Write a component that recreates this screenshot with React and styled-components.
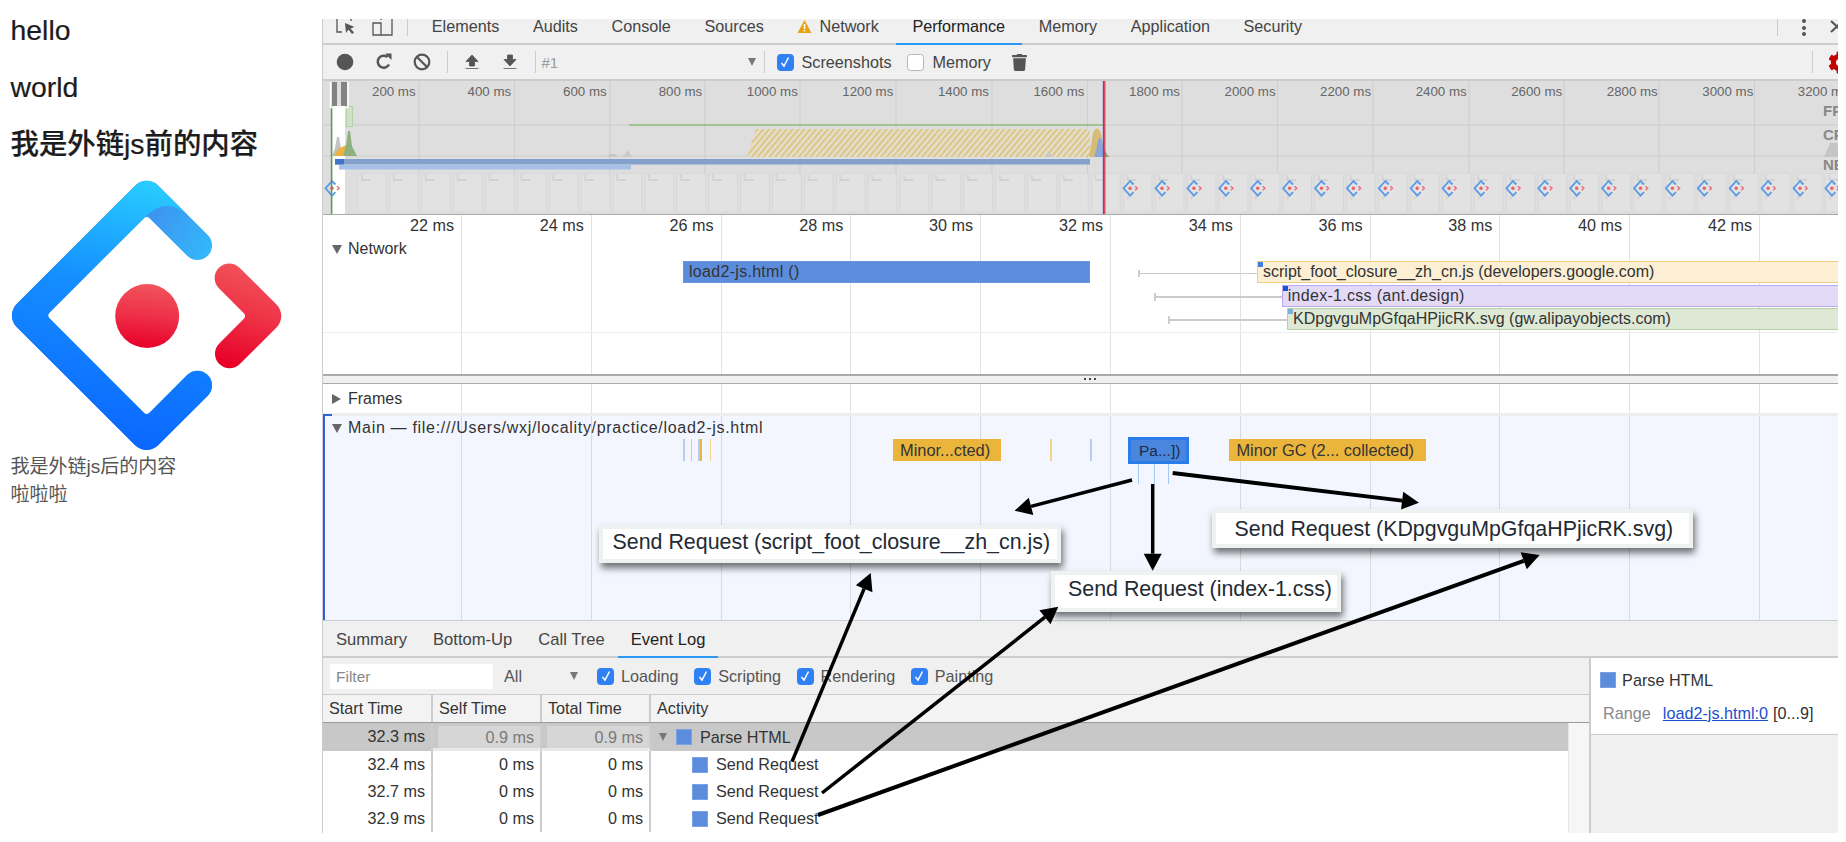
import styled, { createGlobalStyle } from 'styled-components'
import { FaCog, FaTrash } from 'react-icons/fa'

const GlobalStyle = createGlobalStyle`
    html, body {
        margin: 0;
        background: #fff;
    }
    * {
        box-sizing: border-box;
    }
    body {
        font-family: "Liberation Sans", "Noto Sans CJK SC", sans-serif;
        color: #333;
    }
`

const overviewTicks = [418, 513.5, 609, 704, 799, 895, 991, 1086.5, 1181, 1276.5, 1372, 1468, 1563, 1658, 1753.5]
const overviewLabels = [200, 400, 600, 800, 1000, 1200, 1400, 1600, 1800, 2000, 2200, 2400, 2600, 2800, 3000, 3200]
const flameLabels = [22, 24, 26, 28, 30, 32, 34, 36, 38, 40, 42]
const flameTicks = flameLabels.map((_, i) => 138 + i * 129.8)
const topTabs = ['Elements', 'Audits', 'Console', 'Sources', 'Network', 'Performance', 'Memory', 'Application', 'Security']
const filters = ['Loading', 'Scripting', 'Rendering', 'Painting']
const thumbs = Array.from({ length: 47 }, (_, i) => i)
const requests = ['32.4 ms', '32.7 ms', '32.9 ms']
const stripes = [
    { x: 360, color: '#b5cdf3' },
    { x: 367.6, color: '#b5cdf3' },
    { x: 375, color: '#b5cdf3' },
    { x: 377, color: '#e8b53e' },
    { x: 386.5, color: '#f1d48e' },
    { x: 727, color: '#f1d48e' },
    { x: 767, color: '#b5cdf3' },
]
const callouts = [
    { x: 599, y: 525, w: 462, h: 38, pad: 13.5, shift: -2, text: 'Send Request (script_foot_closure__zh_cn.js)' },
    { x: 1051, y: 571, w: 290, h: 41, pad: 17, shift: -2, text: 'Send Request (index-1.css)' },
    { x: 1211.5, y: 509, w: 481.5, h: 39, pad: 23, shift: 1, text: 'Send Request (KDpgvguMpGfqaHPjicRK.svg)' },
]
const arrows = [
    { x1: 1132, y1: 480, x2: 1014.6, y2: 510.7, w: 3.5 },
    { x1: 1152.7, y1: 484, x2: 1152.7, y2: 570.7, w: 3.5 },
    { x1: 1172.7, y1: 473, x2: 1419, y2: 502.7, w: 3.8 },
    { x1: 792, y1: 761.7, x2: 870.7, y2: 573, w: 3.5 },
    { x1: 822, y1: 793, x2: 1058.3, y2: 606.7, w: 3.5 },
    { x1: 818, y1: 815, x2: 1539.7, y2: 555, w: 4 },
]

function AntLogo() {
    const body = 'M91.5880863,4.17652823 L4.17996544,91.5127728 C-0.519240605,96.2081146 -0.519240605,103.791885 4.17996544,108.487227 L91.5880863,195.823472 C96.2872923,200.518814 103.877304,200.518814 108.57651,195.823472 L145.225487,159.204632 C149.433969,154.999611 149.433969,148.181924 145.225487,143.976903 C141.017005,139.771881 134.193707,139.771881 129.985225,143.976903 L102.20193,171.737352 C101.032305,172.906015 99.2571609,172.906015 98.0875359,171.737352 L28.285908,101.993122 C27.1162831,100.824459 27.1162831,99.050775 28.285908,97.8821118 L98.0875359,28.1378823'
    return (
        <LogoSvg viewBox="0 0 200 200">
            <defs>
                <linearGradient id="armFill" x1="62%" y1="0%" x2="108%" y2="38%">
                    <stop stopColor="#4285EB" offset="0%" />
                    <stop stopColor="#2EC7FF" offset="100%" />
                </linearGradient>
                <linearGradient id="bodyFill" x1="69.6%" y1="0%" x2="54%" y2="108.5%">
                    <stop stopColor="#29CDFF" offset="0%" />
                    <stop stopColor="#148EFF" offset="37.9%" />
                    <stop stopColor="#0A60FF" offset="100%" />
                </linearGradient>
                <linearGradient id="tipFill" x1="60%" y1="0%" x2="40%" y2="100%">
                    <stop stopColor="#F2565C" offset="0%" />
                    <stop stopColor="#EE3246" offset="50%" />
                    <stop stopColor="#E80028" offset="100%" />
                </linearGradient>
                <linearGradient id="dotFill" x1="55%" y1="0%" x2="45%" y2="100%">
                    <stop stopColor="#F0545C" offset="0%" />
                    <stop stopColor="#EE3048" offset="50%" />
                    <stop stopColor="#E8002A" offset="100%" />
                </linearGradient>
            </defs>
            <path fill="url(#armFill)" d={body + ' C99.2571609,26.9692191 101.032305,26.9692191 102.20193,28.1378823 L129.985225,55.8983314 C134.193707,60.1033528 141.017005,60.1033528 145.225487,55.8983314 C149.433969,51.69331 149.433969,44.8756232 145.225487,40.6706018 L108.58055,4.05574592 C103.862049,-0.537986846 96.2692618,-0.500797906 91.5880863,4.17652823 Z'} />
            <path fill="url(#bodyFill)" d={body + ' C100.999864,25.6271836 105.751642,20.541824 112.729652,19.3524487 C117.915585,18.4685261 123.585219,20.4140239 129.738554,25.1889424 C125.624663,21.0784292 118.571995,14.0340304 108.58055,4.05574592 C103.862049,-0.537986846 96.2692618,-0.500797906 91.5880863,4.17652823 Z'} />
            <path fill="url(#tipFill)" d="M153.685633,135.854579 C157.894115,140.0596 164.717412,140.0596 168.925894,135.854579 L195.959977,108.842726 C200.659183,104.147384 200.659183,96.5636133 195.960527,91.8688194 L168.690777,64.7181717 C164.472332,60.5180246 157.646868,60.5241263 153.435895,64.7317179 C149.227413,68.9367393 149.227413,75.7544261 153.435895,79.9594475 L171.854035,98.3621694 C173.02366,99.5308326 173.02366,101.304517 171.854035,102.47318 L153.685633,120.626579 C149.47715,124.831601 149.47715,131.649287 153.685633,135.854579 Z" />
            <ellipse fill="url(#dotFill)" cx="100.5" cy="100.4" rx="23.6" ry="23.6" />
        </LogoSvg>
    )
}

function Arrow({ x1, y1, x2, y2, w }) {
    const len = Math.hypot(x2 - x1, y2 - y1)
    const ux = (x2 - x1) / len
    const uy = (y2 - y1) / len
    const bx = x2 - ux * 17
    const by = y2 - uy * 17
    const head = `${x2},${y2} ${bx - uy * 9},${by + ux * 9} ${bx + uy * 9},${by - ux * 9}`
    return (
        <g>
            <line x1={x1} y1={y1} x2={bx} y2={by} stroke="#000" strokeWidth={w} />
            <polygon points={head} fill="#000" />
        </g>
    )
}

function MiniLogo({ cx }) {
    return (
        <g>
            <path d={`M${cx + 3.5} ${184.5}l-3.500-3.500-6.500 7.300 6.500 7.300 3.500-3.500`} fill="none" stroke="#5a9ae6" strokeWidth="1.800" />
            <path d={`M${cx + 5} ${186.300}l2.200 2-2.200 2`} fill="none" stroke="#ee6a74" strokeWidth="1.400" />
            <circle cx={cx} cy="188.300" r="1.700" fill="#e8606c" />
        </g>
    )
}

function Thumb({ i }) {
    const x = 357 + i * 31.9
    return (
        <g>
            <rect x={x} y="173.5" width="28.5" height="38.5" fill="#e2e2e2" stroke="#d8d8d8" />
            <path d={`M${x + 3} 175.800h1.500M${x + 3} 177.800h2M${x + 3} 180h10`} stroke="#b4b4b4" strokeWidth="0.700" />
            {i >= 24 && (
                <g>
                    <MiniLogo cx={x + 6.500} />
                    <path d={`M${x + 3} 197h3M${x + 3} 199h2`} stroke="#c4c4c4" strokeWidth="0.700" />
                </g>
            )}
        </g>
    )
}

function OverviewChart() {
    return (
        <OverviewSvg viewBox="322 81 1516 134">
            <defs>
                <pattern id="hatch" width="4.500" height="4.500" patternUnits="userSpaceOnUse" patternTransform="rotate(40)">
                    <rect width="4.500" height="4.500" fill="#e3dfcf" />
                    <rect width="2" height="4.500" fill="#dfc583" />
                </pattern>
            </defs>
            <path d="M322 125H1838M322 156H1838" stroke="#d2d2d2" strokeWidth="1.400" />
            {overviewTicks.map(x => <line key={x} x1={x} x2={x} y1="81" y2="173" stroke="#cfcfcf" strokeWidth="1.200" />)}
            <rect x="331" y="106" width="13" height="108" fill="#fff" />
            <line x1="628" x2="1102" y1="125" y2="125" stroke="#8dbc7c" strokeWidth="1.400" />
            <rect x="345.500" y="106.500" width="6" height="20" fill="#d2e0ca" stroke="#b2d3a5" />
            <path d="M755 129H1089V157H746Z" fill="url(#hatch)" />
            <path d="M331 156l3-8 2-11 2 0 2 11 4 8Z" fill="#c3c3c3" />
            <path d="M333 156l4-7 8-4 2 11Z" fill="#e8b33f" />
            <path d="M342 156l3-10 2-15 2 0 2 15 5 10Z" fill="#8fb07f" />
            <path d="M606 157l3-3h5l3 3ZM622 157l4-6 1 0 4 6ZM1044 157l4-6 4 6Z" fill="#c8c8c8" />
            <path d="M1088 157l3-18c1-14 9-14 10 0l2 18Z" fill="#d8bb75" />
            <path d="M1093 157l3-10c1-12 5-12 6 0l5 10Z" fill="#8aa7d9" />
            <path d="M1103 150l5 7h-5Z" fill="#84a86f" />
            <path d="M1823 157l6-14h9v14Z" fill="#c5c5c5" />
            <rect x="334" y="159" width="755" height="5.500" fill="#84a1cc" />
            <rect x="334" y="159" width="9" height="5.500" fill="#3f74c9" />
            <rect x="338" y="165" width="292" height="4.500" fill="#a6bfe6" />
            {thumbs.map(i => <Thumb key={i} i={i} />)}
            <rect x="331" y="173" width="13" height="41" fill="#fff" />
            <MiniLogo cx={331} />
            <line x1="330.600" x2="330.600" y1="106" y2="214" stroke="#5b9d55" strokeWidth="1.600" />
            <path d="M331 82h5v24h-5ZM340 82h6v24h-6Z" fill="#838383" />
            <path d="M329.500 82V107.500H336.500M338.500 107.500H347V82" fill="none" stroke="#fff" strokeWidth="1.500" />
            <line x1="1102.500" x2="1102.500" y1="81" y2="214" stroke="#4c4fe0" strokeWidth="1.400" />
            <line x1="1103.800" x2="1103.800" y1="81" y2="214" stroke="#e0304a" strokeWidth="1.200" />
        </OverviewSvg>
    )
}

function GridLines({ $color }) {
    return flameTicks.map(x => <GridLine key={x} $x={x} $color={$color} />)
}

function CheckBox({ checked }) {
    return (
        <Check $checked={checked}>
            {checked && (
                <svg width="10" height="12" viewBox="0 0 10 12">
                    <path d="M1.500 7l2.500 3.200L8.500 1.500" fill="none" stroke="#fff" strokeWidth="1.500" />
                </svg>
            )}
        </Check>
    )
}

export default function App() {
    return (
        <Page>
            <GlobalStyle />
            <Article>
                <Heading>hello</Heading>
                <Heading>world</Heading>
                <Heading>我是外链js前的内容</Heading>
                <AntLogo />
                <Line>我是外链js后的内容</Line>
                <Line>啦啦啦</Line>
            </Article>

            <DevTools>
                <TabBar>
                    <DockIcons>
                        <svg width="20" height="17" viewBox="0 0 20 17">
                            <path d="M1 0v13h5M15 0v2" fill="none" stroke="#555" strokeWidth="1.300" />
                            <path d="M9 4l9.500 4-4 1.500 3.500 4-2 1.500-3.500-4.500L10 14Z" fill="#555" />
                        </svg>
                        <svg width="21" height="17" viewBox="0 0 21 17">
                            <path d="M1 4h8v12H1ZM9 1V0M20 0v16h-11" fill="none" stroke="#555" strokeWidth="1.300" />
                        </svg>
                    </DockIcons>
                    <BarSeparator $after={7} />
                    {topTabs.map(tab => (
                        <TopTab key={tab} $active={tab === 'Performance'}>
                            {tab === 'Network' && (
                                <svg width="15" height="15" viewBox="0 0 15 15">
                                    <path d="M7.500 1L14.500 14H.5Z" fill="#e8a410" />
                                    <path d="M7.500 5v5M7.500 11v1.500" stroke="#fff" strokeWidth="1.500" />
                                </svg>
                            )}
                            {tab}
                        </TopTab>
                    ))}
                    <TabBarEnd>
                        <BarSeparator />
                        <Dots><i /><i /><i /></Dots>
                        <svg width="13" height="15" viewBox="0 0 13 15">
                            <path d="M1 2l6 5.500-6 5.500M13 2L7 7.500l6 5.500" fill="none" stroke="#555" strokeWidth="2.200" />
                        </svg>
                    </TabBarEnd>
                </TabBar>

                <Toolbar>
                    <ToolButton>
                        <svg width="18" height="18" viewBox="0 0 18 18"><circle cx="9" cy="9" r="8.300" fill="#555" /></svg>
                    </ToolButton>
                    <ToolButton>
                        <svg width="18" height="18" viewBox="0 0 18 18">
                            <path d="M14 11.500A6 6 0 1 1 12.500 4" fill="none" stroke="#555" strokeWidth="2.500" />
                            <path d="M10 .5h6.500V7Z" fill="#555" />
                        </svg>
                    </ToolButton>
                    <ToolButton>
                        <svg width="18" height="18" viewBox="0 0 18 18">
                            <circle cx="9" cy="9" r="7.300" fill="none" stroke="#555" strokeWidth="2.200" />
                            <path d="M4 4l10 10" stroke="#555" strokeWidth="2.200" />
                        </svg>
                    </ToolButton>
                    <ToolSeparator $gap={5} />
                    <ToolButton>
                        <svg width="16" height="16" viewBox="0 0 16 16">
                            <path d="M8 1l6 6.500H10.500V12h-5V7.500H2ZM1.500 14.500h13" fill="#555" stroke="#555" strokeWidth=".8" />
                        </svg>
                    </ToolButton>
                    <ToolButton>
                        <svg width="16" height="16" viewBox="0 0 16 16">
                            <path d="M8 12L2 5.500H5.500V1h5v4.500H14ZM1.500 14.500h13" fill="#555" stroke="#555" strokeWidth=".8" />
                        </svg>
                    </ToolButton>
                    <ToolSeparator $gap={5} />
                    <Select>#1<Caret /></Select>
                    <ToolSeparator $gap={12} />
                    <CheckBox checked />
                    <ToolLabel>Screenshots</ToolLabel>
                    <CheckBox />
                    <ToolLabel>Memory</ToolLabel>
                    <Trash />
                    <ToolbarEnd>
                        <ToolSeparator $gap={0} />
                        <Gear />
                    </ToolbarEnd>
                </Toolbar>

                <Overview>
                    <OverviewChart />
                    {overviewLabels.map((ms, i) => <OverviewLabel key={ms} $x={95.6 + i * 95.55}>{ms} ms</OverviewLabel>)}
                    <TrackName $y={22}>FPS</TrackName>
                    <TrackName $y={46}>CPU</TrackName>
                    <TrackName $y={76}>NET</TrackName>
                </Overview>

                <NetworkPanel>
                    <GridLines />
                    {flameLabels.map((ms, i) => <RulerLabel key={ms} $x={flameTicks[i]}>{ms} ms</RulerLabel>)}
                    <SectionName $top={24} $open>Network</SectionName>
                    <RequestBar $x={360} $y={46} $w={406.6} $bg="#5c8ddd" $border="#6a96de" $spread>load2-js.html ()</RequestBar>
                    <Whisker $x={815} $y={57.7} $w={120} />
                    <RequestBar $x={934} $y={46} $w={600} $bg="#fcefd3" $border="#f4cd82" $mark="#3d7fe6">script_foot_closure__zh_cn.js (developers.google.com)</RequestBar>
                    <Whisker $x={831} $y={81} $w={128} />
                    <RequestBar $x={958.7} $y={70} $w={600} $bg="#e3daf8" $border="#b9a7ee" $mark="#1c50e0" $spread>index-1.css (ant.design)</RequestBar>
                    <Whisker $x={845} $y={104} $w={120} />
                    <RequestBar $x={964} $y={93} $w={600} $bg="#dde9d5" $border="#b6d2a5" $mark="#7fb0dc">KDpgvguMpGfqaHPjicRK.svg (gw.alipayobjects.com)</RequestBar>
                    <TrackEnd />
                </NetworkPanel>

                <Splitter>
                    <SplitterDots />
                </Splitter>

                <FramesPanel>
                    <GridLines />
                    <SectionName $top={5}>Frames</SectionName>
                </FramesPanel>

                <MainPanel>
                    <GridLines $color="#d8dae0" />
                    <MainBracket />
                    <SectionName $top={2} $open $spread>Main — file:///Users/wxj/locality/practice/load2-js.html</SectionName>
                    {stripes.map(s => <Stripe key={s.x} $x={s.x} $color={s.color} />)}
                    <TaskBlock $x={570} $w={108}>Minor...cted)</TaskBlock>
                    <SelectedTask>Pa...])</SelectedTask>
                    <SubTask $x={815} />
                    <SubTask $x={831} />
                    <SubTask $x={845} />
                    <TaskBlock $x={906.4} $w={197}>Minor GC (2... collected)</TaskBlock>
                </MainPanel>

                <BottomTabs>
                    <BottomTab>Summary</BottomTab>
                    <BottomTab>Bottom-Up</BottomTab>
                    <BottomTab>Call Tree</BottomTab>
                    <BottomTab $active>Event Log</BottomTab>
                </BottomTabs>

                <BottomBody>
                    <LogPane>
                        <FilterRow>
                            <FilterInput>Filter</FilterInput>
                            <AllSelect>All<Caret /></AllSelect>
                            {filters.map(name => (
                                <FilterItem key={name}>
                                    <CheckBox checked />
                                    {name}
                                </FilterItem>
                            ))}
                        </FilterRow>
                        <LogRow as="header" $head>
                            <HeadCell>Start Time</HeadCell>
                            <HeadCell>Self Time</HeadCell>
                            <HeadCell>Total Time</HeadCell>
                            <HeadCell>Activity</HeadCell>
                        </LogRow>
                        <LogBody>
                            <LogRows>
                                <LogRow $selected>
                                    <TimeCell>32.3 ms</TimeCell>
                                    <TimeCell $muted>0.9 ms</TimeCell>
                                    <TimeCell $muted>0.9 ms</TimeCell>
                                    <ActivityCell>
                                        <Caret />
                                        <Swatch />
                                        Parse HTML
                                    </ActivityCell>
                                </LogRow>
                                {requests.map(time => (
                                    <LogRow key={time}>
                                        <TimeCell>{time}</TimeCell>
                                        <TimeCell>0 ms</TimeCell>
                                        <TimeCell>0 ms</TimeCell>
                                        <ActivityCell $nested>
                                            <Swatch />
                                            Send Request
                                        </ActivityCell>
                                    </LogRow>
                                ))}
                            </LogRows>
                            <Scrollbar />
                        </LogBody>
                    </LogPane>
                    <DetailsPane>
                        <Details>
                            <DetailsTitle><Swatch />Parse HTML</DetailsTitle>
                            <DetailsRange>
                                <RangeLabel>Range</RangeLabel>
                                <RangeLink>load2-js.html:0</RangeLink>
                                [0...9]
                            </DetailsRange>
                        </Details>
                    </DetailsPane>
                </BottomBody>
            </DevTools>

            {callouts.map(c => (
                <Callout key={c.text} $x={c.x} $y={c.y} $w={c.w} $h={c.h} $pad={c.pad} $shift={c.shift}>
                    <span>{c.text}</span>
                </Callout>
            ))}
            <ArrowLayer viewBox="0 0 1846 842">
                {arrows.map(a => <Arrow key={a.x2} {...a} />)}
            </ArrowLayer>
        </Page>
    )
}

const Page = styled.div`
    position: relative;
    display: flex;
    width: 1846px;
    height: 842px;
    overflow: hidden;
`
const Article = styled.article`
    flex: none;
    width: 322px;
    padding: 2px 0 0 10.5px;
`
const Heading = styled.h2`
    margin: 0;
    height: 57px;
    font-size: 28.4px;
    line-height: 57px;
    font-weight: 500;
    color: #1c1c1c;
    -webkit-text-stroke: 0.2px #1c1c1c;
`
const LogoSvg = styled.svg`
    display: block;
    width: 271px;
    height: 271px;
    margin: 7px 0 2px 0;
`
const Line = styled.p`
    margin: 0;
    font-size: 19px;
    line-height: 28px;
    color: #555;
`
const DevTools = styled.section`
    position: relative;
    flex: none;
    width: 1516px;
    height: 814px;
    margin-top: 19px;
    border-left: 1px solid #ccc;
    overflow: hidden;
    display: flex;
    flex-direction: column;
    font-size: 16.2px;
`
const TabBar = styled.nav`
    display: flex;
    align-items: flex-start;
    flex: none;
    height: 26px;
    background: #f0f0f0;
    border-bottom: 2px solid #ccc;
`
const DockIcons = styled.div`
    display: flex;
    align-items: flex-start;
    gap: 16px;
    height: 100%;
    padding-left: 13px;
    width: 84px;
`
const BarSeparator = styled.div`
    flex: none;
    width: 1px;
    height: 17px;
    margin-right: ${props => props.$after || 0}px;
    background: #ccc;
`
const TopTab = styled.div`
    display: flex;
    align-items: flex-start;
    gap: 7px;
    height: 26px;
    padding: 0 16.8px;
    line-height: 15px;
    color: ${props => props.$active ? '#222' : '#444'};
    border-bottom: 2px solid ${props => props.$active ? '#2b99f2' : 'transparent'};
`
const TabBarEnd = styled.div`
    display: flex;
    align-items: flex-start;
    gap: 24px;
    margin-left: auto;
    margin-right: -5px;
`
const Dots = styled.div`
    display: flex;
    flex-direction: column;
    gap: 2.5px;
    i {
        width: 4px;
        height: 4px;
        border-radius: 50%;
        background: #555;
    }
`
const Toolbar = styled.div`
    display: flex;
    align-items: center;
    flex: none;
    height: 36px;
    padding-left: 3px;
    background: #f0f0f0;
    border-bottom: 2px solid #ccc;
`
const ToolButton = styled.div`
    display: flex;
    align-items: center;
    justify-content: center;
    width: 38.5px;
    height: 100%;
`
const ToolSeparator = styled.div`
    flex: none;
    width: 1px;
    height: 22px;
    margin: 0 ${props => props.$gap}px;
    background: #ccc;
`
const Select = styled.div`
    display: flex;
    align-items: center;
    justify-content: space-between;
    width: 214px;
    margin: 0 -4px 0 1px;
    color: #999;
    font-size: 15px;
`
const Caret = styled.i`
    flex: none;
    width: 0;
    height: 0;
    border-left: 4.5px solid transparent;
    border-right: 4.5px solid transparent;
    border-top: 8px solid #777;
`
const Check = styled.span`
    display: flex;
    align-items: center;
    justify-content: center;
    flex: none;
    width: 17px;
    height: 17px;
    border-radius: 3.5px;
    background: ${props => props.$checked ? '#2f80f5' : '#fff'};
    border: 1px solid ${props => props.$checked ? '#2f80f5' : '#b5b5b5'};
`
const ToolLabel = styled.span`
    margin: 0 16px 0 8px;
    color: #444;
`
const Trash = styled(FaTrash)`
    margin-left: 4px;
    color: #555;
    font-size: 17px;
`
const ToolbarEnd = styled.div`
    display: flex;
    align-items: center;
    gap: 15px;
    margin-left: auto;
    margin-right: -13px;
`
const Gear = styled(FaCog)`
    color: #c40000;
    font-size: 23px;
`
const Overview = styled.div`
    position: relative;
    flex: none;
    height: 134px;
    background: #dedede;
    border-bottom: 1px solid #a9a9a9;
`
const OverviewSvg = styled.svg`
    display: block;
    width: 1516px;
    height: 134px;
`
const OverviewLabel = styled.span`
    position: absolute;
    top: 3px;
    left: ${props => props.$x - 47}px;
    width: 44px;
    display: flex;
    justify-content: flex-end;
    white-space: nowrap;
    font-size: 13.3px;
    line-height: 15px;
    color: #666;
`
const TrackName = styled.span`
    position: absolute;
    left: 1500px;
    top: ${props => props.$y}px;
    font-size: 15px;
    line-height: 16px;
    font-weight: 700;
    color: #888;
`
const NetworkPanel = styled.div`
    position: relative;
    flex: none;
    height: 159px;
    background: #fff;
    overflow: hidden;
`
const GridLine = styled.div`
    position: absolute;
    top: 0;
    bottom: 0;
    left: ${props => props.$x}px;
    width: 1px;
    background: ${props => props.$color || '#e2e2e2'};
`
const RulerLabel = styled.span`
    position: absolute;
    top: 0;
    left: ${props => props.$x - 67}px;
    width: 60px;
    text-align: right;
    line-height: 20px;
    color: #333;
    white-space: nowrap;
`
const SectionName = styled.div`
    position: absolute;
    top: ${props => props.$top}px;
    left: 9px;
    display: flex;
    align-items: center;
    gap: 6px;
    line-height: 20px;
    font-size: 16px;
    letter-spacing: ${props => props.$spread ? '0.7px' : '0'};
    color: #333;
    white-space: nowrap;
    &::before {
        content: '';
        width: 0;
        height: 0;
        border-style: solid;
        border-color: transparent;
        ${props => props.$open
            ? 'border-width: 9px 5px 0 5px; border-top-color: #666;'
            : 'border-width: 5px 0 5px 9px; border-left-color: #666; margin-right: 1px;'}
    }
`
const RequestBar = styled.div`
    position: absolute;
    left: ${props => props.$x}px;
    top: ${props => props.$y}px;
    width: ${props => props.$w}px;
    height: 22px;
    padding-left: 5px;
    line-height: 20px;
    font-size: 16px;
    letter-spacing: ${props => props.$spread ? '0.3px' : '0'};
    white-space: nowrap;
    color: #333;
    background: ${props => props.$bg};
    border: 1px solid ${props => props.$border};
    &::before {
        content: '';
        display: ${props => props.$mark ? 'block' : 'none'};
        position: absolute;
        left: 0;
        top: 0;
        width: 5px;
        height: 5px;
        background: ${props => props.$mark};
    }
`
const Whisker = styled.div`
    position: absolute;
    left: ${props => props.$x}px;
    top: ${props => props.$y}px;
    width: ${props => props.$w}px;
    height: 1.5px;
    background: #ccc;
    &::before {
        content: '';
        position: absolute;
        left: 0;
        top: -3px;
        width: 1.5px;
        height: 7.5px;
        background: #ccc;
    }
`
const TrackEnd = styled.div`
    position: absolute;
    left: 0;
    right: 0;
    top: 117px;
    height: 1px;
    background: #eee;
`
const Splitter = styled.div`
    position: relative;
    flex: none;
    height: 10px;
    background: #f0f0f0;
    border-top: 2px solid #aaa;
    border-bottom: 1px solid #aaa;
`
const SplitterDots = styled.i`
    position: absolute;
    left: 761px;
    top: 2px;
    width: 12px;
    height: 2px;
    background: repeating-linear-gradient(90deg, #444 0 2px, transparent 2px 5px);
`
const FramesPanel = styled.div`
    position: relative;
    flex: none;
    height: 32px;
    background: #fff;
    border-bottom: 3px solid #eee;
`
const MainPanel = styled.div`
    position: relative;
    flex: none;
    height: 204px;
    background: #f3f6fe;
`
const MainBracket = styled.div`
    position: absolute;
    left: -1px;
    top: -2px;
    bottom: 0;
    width: 10px;
    border-top: 2px solid #2e62d6;
    border-left: 3px solid #2e62d6;
`
const Stripe = styled.div`
    position: absolute;
    left: ${props => props.$x}px;
    top: 23px;
    width: 1.5px;
    height: 22px;
    background: ${props => props.$color};
`
const TaskBlock = styled.div`
    position: absolute;
    left: ${props => props.$x}px;
    top: 23px;
    width: ${props => props.$w}px;
    height: 22px;
    padding-left: 7px;
    line-height: 22px;
    font-size: 16.4px;
    color: #333;
    white-space: nowrap;
    background: #ebb53c;
`
const SelectedTask = styled.div`
    position: absolute;
    left: 805px;
    top: 21px;
    width: 61px;
    height: 27px;
    padding-left: 8px;
    line-height: 21px;
    font-size: 15.5px;
    color: #1d2b44;
    background: #4a86de;
    border: 3px solid #2a7de8;
`
const SubTask = styled.div`
    position: absolute;
    left: ${props => props.$x}px;
    top: 48px;
    width: 1px;
    height: 20px;
    background: #a6c8f5;
`
const BottomTabs = styled.div`
    display: flex;
    flex: none;
    height: 38px;
    background: #f0f0f0;
    border-top: 1px solid #ccc;
    border-bottom: 2px solid #ccc;
`
const BottomTab = styled.div`
    padding: 0 13px;
    margin-bottom: -2px;
    line-height: 37px;
    font-size: 16.6px;
    color: ${props => props.$active ? '#222' : '#444'};
    border-bottom: 2px solid ${props => props.$active ? '#2b99f2' : 'transparent'};
`
const BottomBody = styled.div`
    display: flex;
    flex: 1;
    min-height: 0;
`
const LogPane = styled.div`
    display: flex;
    flex-direction: column;
    flex: none;
    width: 1265.6px;
`
const FilterRow = styled.div`
    display: flex;
    align-items: center;
    flex: none;
    height: 37px;
    padding-left: 7px;
    color: #555;
    background: #f0f0f0;
    border-bottom: 1px solid #ccc;
`
const FilterInput = styled.div`
    width: 163px;
    height: 25px;
    padding-left: 6px;
    line-height: 26px;
    font-size: 15.5px;
    color: #888;
    background: #fff;
`
const AllSelect = styled.div`
    display: flex;
    align-items: center;
    justify-content: space-between;
    width: 95px;
    padding: 0 10px 0 11px;
`
const FilterItem = styled.label`
    display: flex;
    align-items: center;
    gap: 7px;
    margin: 0 15.5px 0 0;
    &:first-of-type {
        margin-left: 9px;
    }
`
const LogRow = styled.div`
    display: grid;
    grid-template-columns: 110px 109px 109px 1fr;
    flex: none;
    height: ${props => props.$head ? 28 : props.$selected ? 28 : 27}px;
    background: ${props => props.$head ? '#f3f3f3' : props.$selected ? '#c8c8c8' : '#fff'};
    border-bottom: ${props => props.$head ? '1.5px solid #999' : 'none'};
`
const HeadCell = styled.div`
    padding-left: 6px;
    line-height: 27px;
    color: #333;
    border-right: 2px solid #ccc;
    &:last-child {
        border-right: none;
    }
`
const LogBody = styled.div`
    display: flex;
    flex: 1;
    min-height: 0;
`
const LogRows = styled.div`
    flex: 1;
    min-width: 0;
`
const Scrollbar = styled.div`
    flex: none;
    width: 20.6px;
    background: #f6f6f6;
    border-left: 1px solid #e6e6e6;
`
const TimeCell = styled.div`
    padding-right: 6px;
    text-align: right;
    line-height: 27px;
    color: ${props => props.$muted ? '#7a7a7a' : '#333'};
    border-right: 2px solid #ccc;
    ${props => props.$muted && `
        background: #d6d6d6;
        box-shadow: inset 5px 0 0 #c8c8c8;
        border-top: 3px solid #c8c8c8;
        border-bottom: 3px solid #e8e8e8;
        line-height: 22px;
    `}
`
const ActivityCell = styled.div`
    display: flex;
    align-items: center;
    gap: 8px;
    padding-left: ${props => props.$nested ? '41px' : '8px'};
    i {
        margin-right: 1px;
    }
`
const Swatch = styled.span`
    flex: none;
    width: 16px;
    height: 16px;
    background: #5c8ddd;
    border: 1px solid #7aa2e4;
`
const DetailsPane = styled.aside`
    flex: 1;
    background: #f0f0f0;
    border-left: 2px solid #ccc;
`
const Details = styled.div`
    height: 77px;
    padding: 13px 0 0 9.5px;
    background: #fff;
    border-bottom: 1.5px solid #ccc;
`
const DetailsTitle = styled.div`
    display: flex;
    align-items: center;
    gap: 6px;
    height: 18px;
    color: #333;
`
const DetailsRange = styled.div`
    margin-top: 15px;
    padding-left: 3px;
    line-height: 18px;
    white-space: nowrap;
`
const RangeLabel = styled.span`
    margin-right: 12px;
    color: #888;
`
const RangeLink = styled.span`
    margin-right: 5px;
    color: #1a4fd0;
    text-decoration: underline;
`
const Callout = styled.div`
    position: absolute;
    left: ${props => props.$x}px;
    top: ${props => props.$y}px;
    width: ${props => props.$w}px;
    height: ${props => props.$h}px;
    padding-left: ${props => props.$pad - 4}px;
    line-height: ${props => props.$h - 8 + props.$shift * 2}px;
    font-size: 21.4px;
    white-space: nowrap;
    color: #232a33;
    background: #fff;
    border: 4px solid #eef2f0;
    box-shadow: 2px 5px 7px rgba(0, 0, 0, 0.55);
`
const ArrowLayer = styled.svg`
    position: absolute;
    left: 0;
    top: 0;
    width: 1846px;
    height: 842px;
    pointer-events: none;
`
